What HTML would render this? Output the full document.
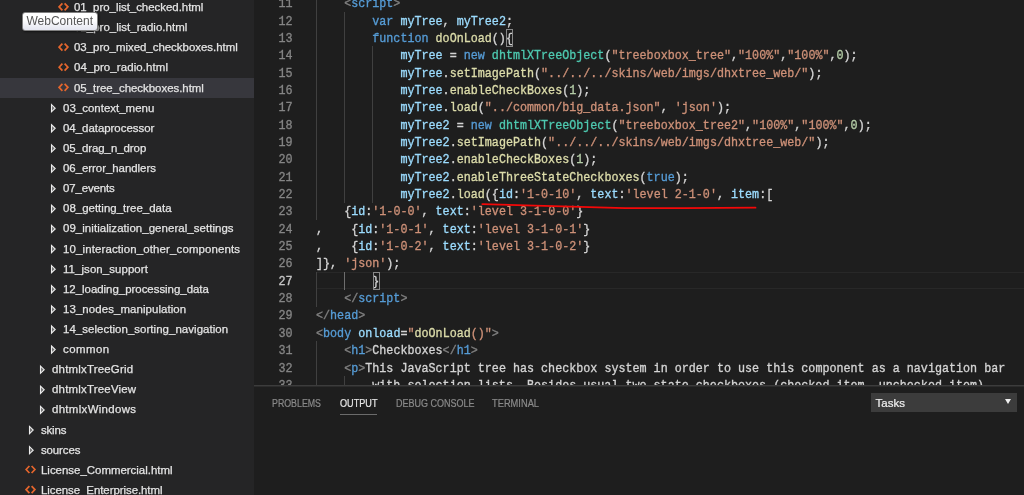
<!DOCTYPE html>
<html><head><meta charset="utf-8"><title>VS Code</title>
<style>
html,body{margin:0;padding:0;}
body{width:1024px;height:495px;overflow:hidden;background:#1e1e1e;position:relative;font-family:"Liberation Sans",sans-serif;}
#sidebg{position:absolute;left:0;top:0;width:254px;height:495px;background:#252526;}
#all{position:absolute;left:0;top:0;width:1024px;height:495px;will-change:transform;}
#side{position:absolute;left:0;top:0;width:254px;height:495px;overflow:hidden;}
.row{position:absolute;left:0;width:254px;height:20px;line-height:20px;color:#e4e4e4;-webkit-text-stroke:0.25px;font-size:11.45px;white-space:pre;}
.row.sel{background:#37373d;}
.row span.lbl{position:absolute;top:0;}
.tw{position:absolute;width:0;height:0;border-top:4px solid transparent;border-bottom:4px solid transparent;border-left:4.5px solid #e0e0e0;}
.hi{position:absolute;color:#e37933;font-family:"Liberation Mono",monospace;font-weight:bold;}
#ed{position:absolute;left:254px;top:0;width:770px;height:385px;overflow:hidden;}
.cl{position:absolute;left:62.0px;height:17.35px;line-height:17.35px;font-family:"Liberation Mono",monospace;font-size:13.5px;white-space:pre;color:#d4d4d4;-webkit-text-stroke:0.35px;transform:scaleX(0.86815);transform-origin:0 0;margin-top:0.75px;}
.ln{position:absolute;left:0;width:38.5px;text-align:right;height:17.35px;line-height:17.35px;font-family:"Liberation Mono",monospace;font-size:13.5px;color:#858585;-webkit-text-stroke:0.35px;transform:scaleX(0.86815);transform-origin:100% 0;margin-top:0.75px;}
.ln.act{color:#c6c6c6;}
.g{position:absolute;width:1px;background:#404040;}
.t{color:#808080}.k{color:#569cd6}.v{color:#9cdcfe}.s{color:#ce9178}.f{color:#dcdcaa}.c{color:#4ec9b0}.n{color:#b5cea8}
#panel{position:absolute;left:254px;top:385px;width:770px;height:110px;}
.tab{position:absolute;top:12.5px;font-size:10px;color:#8a8a8a;-webkit-text-stroke:0.2px;white-space:pre;transform-origin:0 0;}
.tab.on{color:#e7e7e7;}
</style></head><body>
<div id="sidebg"></div>
<div id="all">
<div id="side">
<div style="position:absolute;left:0;top:78px;width:254px;height:20px;background:#37373d"></div>
<div class="row" style="top:-3px"><svg style="position:absolute;left:58px;top:0" width="12" height="20" viewBox="0 0 12 20"><path transform="translate(0.00 9.85)" d="M4.4 -3.5 L1.1 0 L4.4 3.5 M6.6 -3.5 L9.9 0 L6.6 3.5" fill="none" stroke="#e5662d" stroke-width="1.7"/></svg><span class="lbl" style="left:74px;letter-spacing:-0.014px">01_pro_list_checked.html</span></div>
<div class="row" style="top:17px"><svg style="position:absolute;left:58px;top:0" width="12" height="20" viewBox="0 0 12 20"><path transform="translate(0.00 9.96)" d="M4.4 -3.5 L1.1 0 L4.4 3.5 M6.6 -3.5 L9.9 0 L6.6 3.5" fill="none" stroke="#e5662d" stroke-width="1.7"/></svg><span class="lbl" style="left:74px;letter-spacing:0.034px">02_pro_list_radio.html</span></div>
<div class="row" style="top:37px"><svg style="position:absolute;left:58px;top:0" width="12" height="20" viewBox="0 0 12 20"><path transform="translate(0.00 10.08)" d="M4.4 -3.5 L1.1 0 L4.4 3.5 M6.6 -3.5 L9.9 0 L6.6 3.5" fill="none" stroke="#e5662d" stroke-width="1.7"/></svg><span class="lbl" style="left:74px;letter-spacing:-0.011px">03_pro_mixed_checkboxes.html</span></div>
<div class="row" style="top:57px"><svg style="position:absolute;left:58px;top:0" width="12" height="20" viewBox="0 0 12 20"><path transform="translate(0.00 10.20)" d="M4.4 -3.5 L1.1 0 L4.4 3.5 M6.6 -3.5 L9.9 0 L6.6 3.5" fill="none" stroke="#e5662d" stroke-width="1.7"/></svg><span class="lbl" style="left:74px;letter-spacing:0.112px">04_pro_radio.html</span></div>
<div class="row" style="top:78px"><svg style="position:absolute;left:58px;top:0" width="12" height="20" viewBox="0 0 12 20"><path transform="translate(0.00 9.31)" d="M4.4 -3.5 L1.1 0 L4.4 3.5 M6.6 -3.5 L9.9 0 L6.6 3.5" fill="none" stroke="#e5662d" stroke-width="1.7"/></svg><span class="lbl" style="left:74px;letter-spacing:-0.021px">05_tree_checkboxes.html</span></div>
<div class="row" style="top:98px"><svg style="position:absolute;left:50px;top:0" width="8" height="20" viewBox="0 0 8 20"><path transform="translate(1.00 10.22)" d="M0.5 -3.6 L4.2 0 L0.5 3.6 Z" fill="#707070" stroke="#ececec" stroke-width="1.1"/></svg><span class="lbl" style="left:63px;letter-spacing:0.025px">03_context_menu</span></div>
<div class="row" style="top:118px"><svg style="position:absolute;left:50px;top:0" width="8" height="20" viewBox="0 0 8 20"><path transform="translate(1.00 10.34)" d="M0.5 -3.6 L4.2 0 L0.5 3.6 Z" fill="#707070" stroke="#ececec" stroke-width="1.1"/></svg><span class="lbl" style="left:63px;letter-spacing:-0.016px">04_dataprocessor</span></div>
<div class="row" style="top:138px"><svg style="position:absolute;left:50px;top:0" width="8" height="20" viewBox="0 0 8 20"><path transform="translate(1.00 10.45)" d="M0.5 -3.6 L4.2 0 L0.5 3.6 Z" fill="#707070" stroke="#ececec" stroke-width="1.1"/></svg><span class="lbl" style="left:63px;letter-spacing:-0.053px">05_drag_n_drop</span></div>
<div class="row" style="top:158px"><svg style="position:absolute;left:50px;top:0" width="8" height="20" viewBox="0 0 8 20"><path transform="translate(1.00 10.57)" d="M0.5 -3.6 L4.2 0 L0.5 3.6 Z" fill="#707070" stroke="#ececec" stroke-width="1.1"/></svg><span class="lbl" style="left:63px;letter-spacing:-0.033px">06_error_handlers</span></div>
<div class="row" style="top:178px"><svg style="position:absolute;left:50px;top:0" width="8" height="20" viewBox="0 0 8 20"><path transform="translate(1.00 10.69)" d="M0.5 -3.6 L4.2 0 L0.5 3.6 Z" fill="#707070" stroke="#ececec" stroke-width="1.1"/></svg><span class="lbl" style="left:63px;letter-spacing:-0.138px">07_events</span></div>
<div class="row" style="top:198px"><svg style="position:absolute;left:50px;top:0" width="8" height="20" viewBox="0 0 8 20"><path transform="translate(1.00 10.80)" d="M0.5 -3.6 L4.2 0 L0.5 3.6 Z" fill="#707070" stroke="#ececec" stroke-width="1.1"/></svg><span class="lbl" style="left:63px;letter-spacing:0.023px">08_getting_tree_data</span></div>
<div class="row" style="top:218px"><svg style="position:absolute;left:50px;top:0" width="8" height="20" viewBox="0 0 8 20"><path transform="translate(1.00 10.91)" d="M0.5 -3.6 L4.2 0 L0.5 3.6 Z" fill="#707070" stroke="#ececec" stroke-width="1.1"/></svg><span class="lbl" style="left:63px;letter-spacing:0.062px">09_initialization_general_settings</span></div>
<div class="row" style="top:239px"><svg style="position:absolute;left:50px;top:0" width="8" height="20" viewBox="0 0 8 20"><path transform="translate(1.00 10.03)" d="M0.5 -3.6 L4.2 0 L0.5 3.6 Z" fill="#707070" stroke="#ececec" stroke-width="1.1"/></svg><span class="lbl" style="left:63px;letter-spacing:0.137px">10_interaction_other_components</span></div>
<div class="row" style="top:259px"><svg style="position:absolute;left:50px;top:0" width="8" height="20" viewBox="0 0 8 20"><path transform="translate(1.00 10.14)" d="M0.5 -3.6 L4.2 0 L0.5 3.6 Z" fill="#707070" stroke="#ececec" stroke-width="1.1"/></svg><span class="lbl" style="left:63px;letter-spacing:0.079px">11_json_support</span></div>
<div class="row" style="top:279px"><svg style="position:absolute;left:50px;top:0" width="8" height="20" viewBox="0 0 8 20"><path transform="translate(1.00 10.26)" d="M0.5 -3.6 L4.2 0 L0.5 3.6 Z" fill="#707070" stroke="#ececec" stroke-width="1.1"/></svg><span class="lbl" style="left:63px;letter-spacing:-0.016px">12_loading_processing_data</span></div>
<div class="row" style="top:299px"><svg style="position:absolute;left:50px;top:0" width="8" height="20" viewBox="0 0 8 20"><path transform="translate(1.00 10.37)" d="M0.5 -3.6 L4.2 0 L0.5 3.6 Z" fill="#707070" stroke="#ececec" stroke-width="1.1"/></svg><span class="lbl" style="left:63px;letter-spacing:0.086px">13_nodes_manipulation</span></div>
<div class="row" style="top:319px"><svg style="position:absolute;left:50px;top:0" width="8" height="20" viewBox="0 0 8 20"><path transform="translate(1.00 10.49)" d="M0.5 -3.6 L4.2 0 L0.5 3.6 Z" fill="#707070" stroke="#ececec" stroke-width="1.1"/></svg><span class="lbl" style="left:63px;letter-spacing:0.055px">14_selection_sorting_navigation</span></div>
<div class="row" style="top:339px"><svg style="position:absolute;left:50px;top:0" width="8" height="20" viewBox="0 0 8 20"><path transform="translate(1.00 10.60)" d="M0.5 -3.6 L4.2 0 L0.5 3.6 Z" fill="#707070" stroke="#ececec" stroke-width="1.1"/></svg><span class="lbl" style="left:63px;letter-spacing:0.449px">common</span></div>
<div class="row" style="top:359px"><svg style="position:absolute;left:39px;top:0" width="8" height="20" viewBox="0 0 8 20"><path transform="translate(1.00 10.72)" d="M0.5 -3.6 L4.2 0 L0.5 3.6 Z" fill="#707070" stroke="#ececec" stroke-width="1.1"/></svg><span class="lbl" style="left:52px;letter-spacing:0.202px">dhtmlxTreeGrid</span></div>
<div class="row" style="top:379px"><svg style="position:absolute;left:39px;top:0" width="8" height="20" viewBox="0 0 8 20"><path transform="translate(1.00 10.83)" d="M0.5 -3.6 L4.2 0 L0.5 3.6 Z" fill="#707070" stroke="#ececec" stroke-width="1.1"/></svg><span class="lbl" style="left:52px;letter-spacing:0.210px">dhtmlxTreeView</span></div>
<div class="row" style="top:399px"><svg style="position:absolute;left:39px;top:0" width="8" height="20" viewBox="0 0 8 20"><path transform="translate(1.00 10.95)" d="M0.5 -3.6 L4.2 0 L0.5 3.6 Z" fill="#707070" stroke="#ececec" stroke-width="1.1"/></svg><span class="lbl" style="left:52px;letter-spacing:0.325px">dhtmlxWindows</span></div>
<div class="row" style="top:420px"><svg style="position:absolute;left:28px;top:0" width="8" height="20" viewBox="0 0 8 20"><path transform="translate(1.00 10.06)" d="M0.5 -3.6 L4.2 0 L0.5 3.6 Z" fill="#707070" stroke="#ececec" stroke-width="1.1"/></svg><span class="lbl" style="left:41px;letter-spacing:-0.177px">skins</span></div>
<div class="row" style="top:440px"><svg style="position:absolute;left:28px;top:0" width="8" height="20" viewBox="0 0 8 20"><path transform="translate(1.00 10.18)" d="M0.5 -3.6 L4.2 0 L0.5 3.6 Z" fill="#707070" stroke="#ececec" stroke-width="1.1"/></svg><span class="lbl" style="left:41px;letter-spacing:-0.113px">sources</span></div>
<div class="row" style="top:460px"><svg style="position:absolute;left:25px;top:0" width="12" height="20" viewBox="0 0 12 20"><path transform="translate(0.00 9.49)" d="M4.4 -3.5 L1.1 0 L4.4 3.5 M6.6 -3.5 L9.9 0 L6.6 3.5" fill="none" stroke="#e5662d" stroke-width="1.7"/></svg><span class="lbl" style="left:41px;letter-spacing:-0.001px">License_Commercial.html</span></div>
<div class="row" style="top:480px"><svg style="position:absolute;left:25px;top:0" width="12" height="20" viewBox="0 0 12 20"><path transform="translate(0.00 9.61)" d="M4.4 -3.5 L1.1 0 L4.4 3.5 M6.6 -3.5 L9.9 0 L6.6 3.5" fill="none" stroke="#e5662d" stroke-width="1.7"/></svg><span class="lbl" style="left:41px;letter-spacing:-0.054px">License_Enterprise.html</span></div>
<div style="position:absolute;left:21.5px;top:11.5px;width:76.5px;height:19px;box-sizing:border-box;border:1px solid #808080;border-radius:3px;background:linear-gradient(#ffffff 40%,#e4e5f0);color:#575757;font-size:12px;line-height:17px;text-align:center;box-shadow:1px 1px 2px rgba(0,0,0,.5)">WebContent</div>
</div>
<div id="ed">
<div style="position:absolute;left:62.0px;top:272.00px;width:720px;height:17.35px;box-sizing:border-box;border-top:1px solid #282828;border-bottom:1px solid #282828"></div>
<i class="g" style="left:62.0px;top:-5.60px;height:225.55px"></i><i class="g" style="left:62.0px;top:272.00px;height:34.70px"></i><i class="g" style="left:62.0px;top:341.40px;height:52.05px"></i><i class="g" style="left:90.1px;top:11.75px;height:190.85px"></i><i class="g" style="left:90.1px;top:376.10px;height:17.35px"></i><i class="g" style="left:118.3px;top:46.45px;height:156.15px"></i><i class="g" style="left:90.1px;top:272.00px;height:18.35px;background:#6e6e6e"></i>
<div class="ln" style="top:-5.60px">11</div><div class="cl" style="top:-5.60px">    <span class="t">&lt;</span><span class="k">script</span><span class="t">&gt;</span></div>
<div class="ln" style="top:11.75px">12</div><div class="cl" style="top:11.75px">        <span class="k">var</span> <span class="v">myTree</span>, <span class="v">myTree2</span>;</div>
<div class="ln" style="top:29.10px">13</div><div class="cl" style="top:29.10px">        <span class="k">function</span> <span class="f">doOnLoad</span>(){</div>
<div class="ln" style="top:46.45px">14</div><div class="cl" style="top:46.45px">            <span class="v">myTree</span> = <span class="k">new</span> <span class="c">dhtmlXTreeObject</span>(<span class="s">"treeboxbox_tree"</span>,<span class="s">"100%"</span>,<span class="s">"100%"</span>,<span class="n">0</span>);</div>
<div class="ln" style="top:63.80px">15</div><div class="cl" style="top:63.80px">            <span class="v">myTree</span>.<span class="f">setImagePath</span>(<span class="s">"../../../skins/web/imgs/dhxtree_web/"</span>);</div>
<div class="ln" style="top:81.15px">16</div><div class="cl" style="top:81.15px">            <span class="v">myTree</span>.<span class="f">enableCheckBoxes</span>(<span class="n">1</span>);</div>
<div class="ln" style="top:98.50px">17</div><div class="cl" style="top:98.50px">            <span class="v">myTree</span>.<span class="f">load</span>(<span class="s">"../common/big_data.json"</span>, <span class="s">'json'</span>);</div>
<div class="ln" style="top:115.85px">18</div><div class="cl" style="top:115.85px">            <span class="v">myTree2</span> = <span class="k">new</span> <span class="c">dhtmlXTreeObject</span>(<span class="s">"treeboxbox_tree2"</span>,<span class="s">"100%"</span>,<span class="s">"100%"</span>,<span class="n">0</span>);</div>
<div class="ln" style="top:133.20px">19</div><div class="cl" style="top:133.20px">            <span class="v">myTree2</span>.<span class="f">setImagePath</span>(<span class="s">"../../../skins/web/imgs/dhxtree_web/"</span>);</div>
<div class="ln" style="top:150.55px">20</div><div class="cl" style="top:150.55px">            <span class="v">myTree2</span>.<span class="f">enableCheckBoxes</span>(<span class="n">1</span>);</div>
<div class="ln" style="top:167.90px">21</div><div class="cl" style="top:167.90px">            <span class="v">myTree2</span>.<span class="f">enableThreeStateCheckboxes</span>(<span class="k">true</span>);</div>
<div class="ln" style="top:185.25px">22</div><div class="cl" style="top:185.25px">            <span class="v">myTree2</span>.<span class="f">load</span>({<span class="v">id</span>:<span class="s">'1-0-10'</span>, <span class="v">text</span>:<span class="s">'level 2-1-0'</span>, <span class="v">item</span>:[</div>
<div class="ln" style="top:202.60px">23</div><div class="cl" style="top:202.60px">    {<span class="v">id</span>:<span class="s">'1-0-0'</span>, <span class="v">text</span>:<span class="s">'level 3-1-0-0'</span>}</div>
<div class="ln" style="top:219.95px">24</div><div class="cl" style="top:219.95px">,    {<span class="v">id</span>:<span class="s">'1-0-1'</span>, <span class="v">text</span>:<span class="s">'level 3-1-0-1'</span>}</div>
<div class="ln" style="top:237.30px">25</div><div class="cl" style="top:237.30px">,    {<span class="v">id</span>:<span class="s">'1-0-2'</span>, <span class="v">text</span>:<span class="s">'level 3-1-0-2'</span>}</div>
<div class="ln" style="top:254.65px">26</div><div class="cl" style="top:254.65px">]}, <span class="s">'json'</span>);</div>
<div class="ln act" style="top:272.00px">27</div><div class="cl" style="top:272.00px">        }</div>
<div class="ln" style="top:289.35px">28</div><div class="cl" style="top:289.35px">    <span class="t">&lt;/</span><span class="k">script</span><span class="t">&gt;</span></div>
<div class="ln" style="top:306.70px">29</div><div class="cl" style="top:306.70px"><span class="t">&lt;/</span><span class="k">head</span><span class="t">&gt;</span></div>
<div class="ln" style="top:324.05px">30</div><div class="cl" style="top:324.05px"><span class="t">&lt;</span><span class="k">body</span> <span class="v">onload</span>=<span class="s">"</span><span class="f">doOnLoad</span><span class="s">()"</span><span class="t">&gt;</span></div>
<div class="ln" style="top:341.40px">31</div><div class="cl" style="top:341.40px">    <span class="t">&lt;</span><span class="k">h1</span><span class="t">&gt;</span>Checkboxes<span class="t">&lt;/</span><span class="k">h1</span><span class="t">&gt;</span></div>
<div class="ln" style="top:358.75px">32</div><div class="cl" style="top:358.75px">    <span class="t">&lt;</span><span class="k">p</span><span class="t">&gt;</span>This JavaScript tree has checkbox system in order to use this component as a navigation bar</div>
<div class="ln" style="top:376.10px">33</div><div class="cl" style="top:376.10px">        with selection lists. Besides usual two-state checkboxes (checked item, unchecked item),</div>
<div style="position:absolute;left:252.2px;top:29.10px;width:7.3px;height:18.05px;box-sizing:border-box;border:1px solid #888"></div>
<div style="position:absolute;left:118.6px;top:272.00px;width:7.3px;height:18.05px;box-sizing:border-box;border:1px solid #888"></div>
<svg style="position:absolute;left:0;top:0" width="770" height="386"><path d="M228.3 204.1 C 270 205, 320 207, 371 208.2 L 430 208.1 L 501.5 207.7" fill="none" stroke="#f40808" stroke-width="1.8" stroke-linecap="round" stroke-linejoin="round"/></svg>
</div>
<div id="panel">
<div style="position:absolute;left:0;top:0;width:770px;height:1px;background:#3c3c3c"></div><div style="position:absolute;left:0;top:1px;width:770px;height:1px;background:#2c2c2c"></div>
<span class="tab" style="left:18.0px;transform:scaleX(0.8817)">PROBLEMS</span><span class="tab on" style="left:85.5px;transform:scaleX(0.9122)">OUTPUT</span><span class="tab" style="left:141.5px;transform:scaleX(0.8998)">DEBUG CONSOLE</span><span class="tab" style="left:238.0px;transform:scaleX(0.9296)">TERMINAL</span><div style="position:absolute;left:85.5px;top:29px;width:37.5px;height:1px;background:#6b6b6b"></div>
<div style="position:absolute;left:617px;top:8px;width:146px;height:19px;background:#3c3c3c;color:#f0f0f0;font-size:11.5px;line-height:19px"><span style="position:absolute;left:4.5px;top:0.9px;-webkit-text-stroke:0.2px">Tasks</span><i style="position:absolute;left:133.6px;top:6.2px;width:0;height:0;border-left:3px solid transparent;border-right:3px solid transparent;border-top:5.6px solid #f0f0f0"></i></div>
</div>
</div>
</body></html>
